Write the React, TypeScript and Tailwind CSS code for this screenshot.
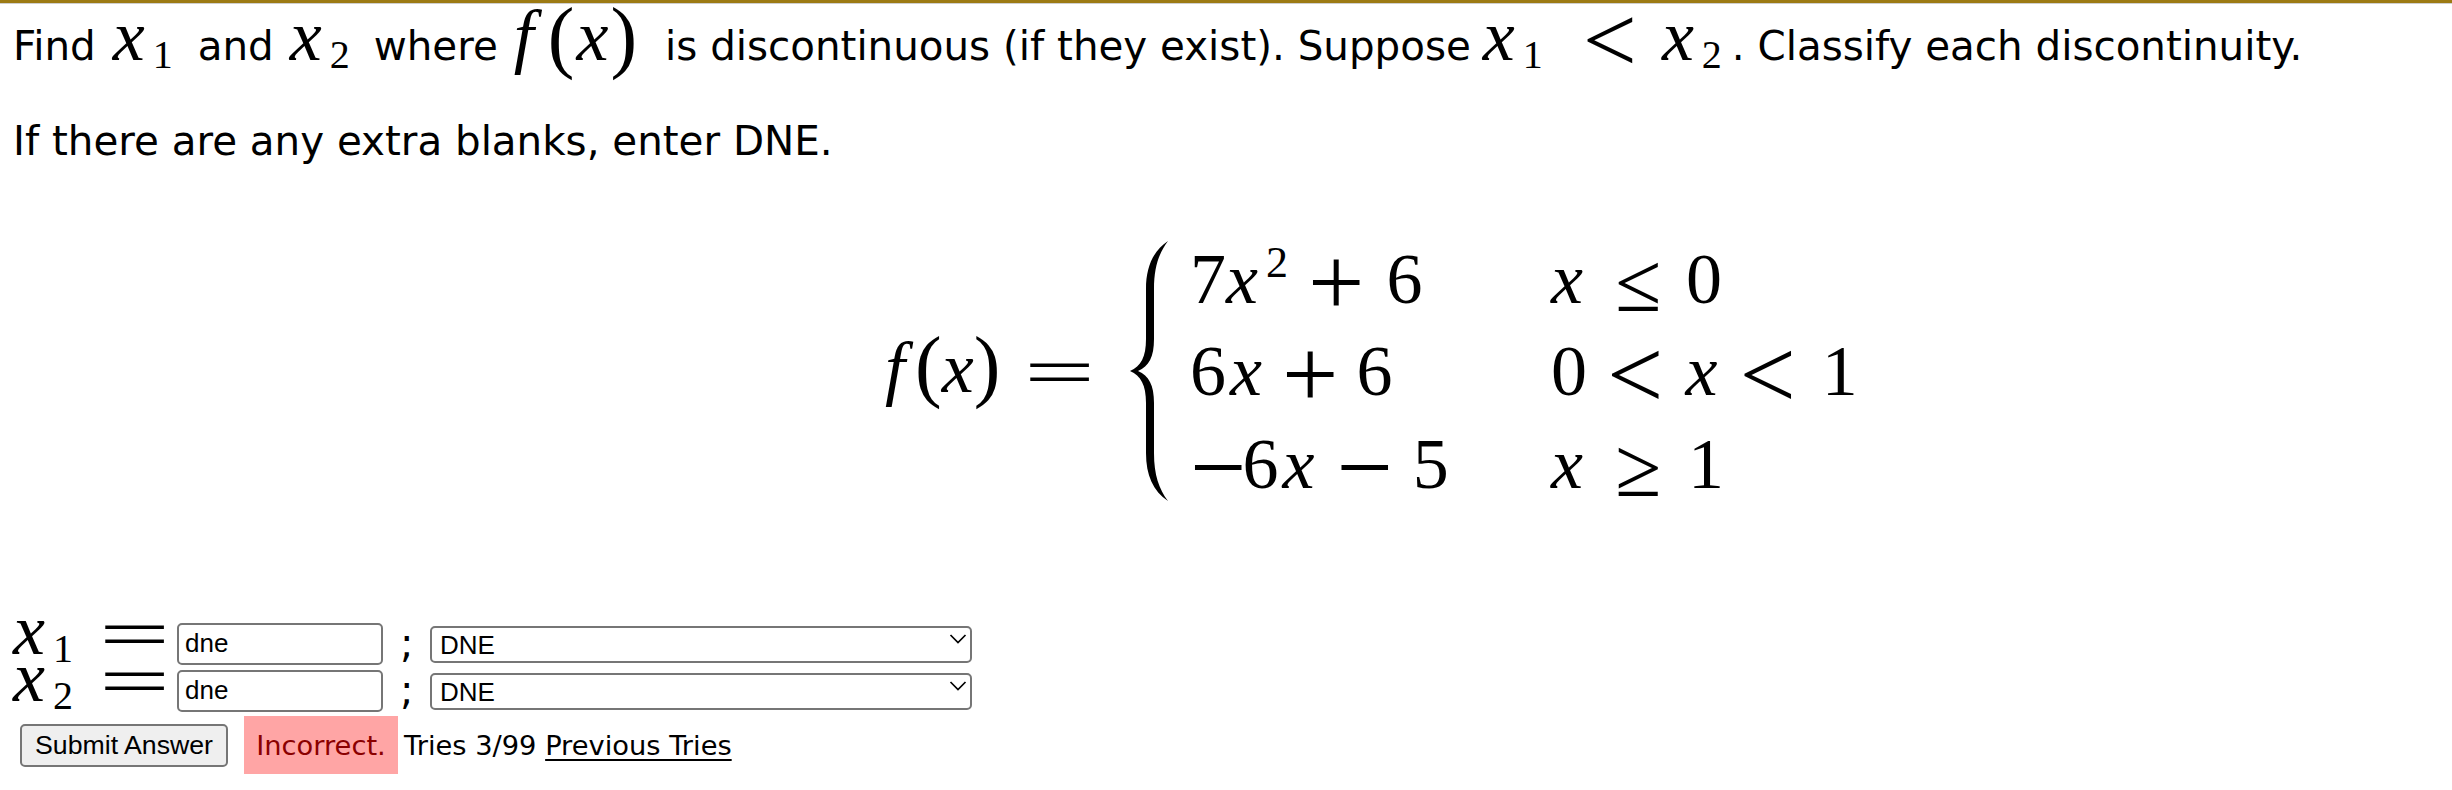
const serif = "font-['Liberation_Serif','Times_New_Roman',serif]";

function Xi({ className = "" }: { className?: string }) {
  return <span className={`${serif} text-[72px] italic ${className}`}>x</span>;
}

function Sub({ n }: { n: number }) {
  return <span className={`${serif} relative top-[8px] ml-[8px] text-[40px]`}>{n}</span>;
}

function Xvar({ n, className = "" }: { n: number; className?: string }) {
  return (
    <span className={`inline-flex items-baseline whitespace-nowrap ${className}`}>
      <Xi />
      <Sub n={n} />
    </span>
  );
}

function Equals({ className = "" }: { className?: string }) {
  return <span className={`relative top-[4px] inline-block origin-left scale-x-[1.8] text-[70px] ${className}`}>=</span>;
}

function Chevron() {
  return (
    <svg width="18" height="10" viewBox="0 0 18 10" className="pointer-events-none absolute right-[5px] top-[14px]" aria-hidden="true">
      <path d="M1.5 1 L9 8.5 L16.5 1" fill="none" stroke="#000" strokeWidth="1.7" />
    </svg>
  );
}

function AnswerRow({ n }: { n: number }) {
  return (
    <div className="flex h-[47px] items-center">
      <div className={`${serif} -mt-[24px] flex h-[47px] w-[164px] items-baseline leading-[47px]`}>
        <Xvar n={n} />
        <Equals className="ml-[26px]" />
      </div>
      <input
        defaultValue="dne"
        className="mt-[2px] h-[42px] w-[206px] rounded-[5px] border-2 border-[#767676] bg-white px-[6px] font-['Liberation_Sans',Arial,sans-serif] text-[26px] text-black outline-none"
      />
      <span className="w-[47px] pl-[17px] text-[40px] leading-none">;</span>
      <div className="relative -mt-[3px]">
        <select
          defaultValue="DNE"
          className="h-[37px] w-[542px] appearance-none rounded-[5px] border-2 border-[#767676] bg-white pl-[8px] font-['Liberation_Sans',Arial,sans-serif] text-[26px] leading-none text-black outline-none"
        >
          <option>DNE</option>
          <option>Removable</option>
          <option>Jump</option>
          <option>Infinite</option>
        </select>
        <Chevron />
      </div>
    </div>
  );
}

function CaseBrace() {
  return (
    <svg width="44" height="264" viewBox="0 0 44 264" className="shrink-0" aria-hidden="true">
      <path
        d="M41 2 C26 12 19 28 19 50 L19 100 C19 118 14 127 3 132 C14 137 19 146 19 164 L19 214 C19 236 26 252 41 262 C32 250 27 236 27 214 L27 164 C27 146 22 137 11 132 C22 127 27 118 27 100 L27 50 C27 28 32 14 41 2 Z"
        fill="#000"
      />
    </svg>
  );
}

// operators sit lower and wider than Liberation draws them at digit size
function Op({ children, className = "" }: { children: React.ReactNode; className?: string }) {
  return <span className={`relative top-[13px] text-[100px] leading-[60px] ${className}`}>{children}</span>;
}

function Rel({ children, className = "" }: { children: React.ReactNode; className?: string }) {
  return <span className={`relative top-[8px] text-[84px] leading-[60px] ${className}`}>{children}</span>;
}

function Cell({ children }: { children: React.ReactNode }) {
  return <div className="flex h-[92.5px] items-baseline whitespace-pre leading-[92.5px]">{children}</div>;
}

export default function App() {
  return (
    <div className="h-[790px] w-[2452px] overflow-hidden bg-white font-['DejaVu_Sans',Verdana,sans-serif] text-[40.4px] leading-none text-black">
      <div className="h-[3px] bg-[#9c7a13]" />
      <div className="h-[1px] bg-[#cfcfcf]" />

      <div className="flex h-[117px] items-baseline whitespace-pre pl-[13px] pt-[4px] leading-[40px]">
        <span>Find</span>
        <Xvar n={1} className="ml-[17px]" />
        <span className="ml-[25px]">and</span>
        <Xvar n={2} className="ml-[16px]" />
        <span className="ml-[24px]">where</span>
        <span className={`${serif} ml-[16px] inline-flex items-baseline text-[72px]`}>
          <i>f</i>
          <span className="relative top-[3px] ml-[14px] text-[80px]">(</span>
          <Xi className="ml-[2px]" />
          <span className="relative top-[3px] ml-[2px] text-[80px]">)</span>
        </span>
        <span className="ml-[28px]">is discontinuous (if they exist). Suppose</span>
        <Xvar n={1} className="ml-[12px]" />
        <span className={`${serif} relative top-[12px] ml-[40px] text-[96px]`}>&lt;</span>
        <Xvar n={2} className="ml-[25px]" />
        <span className="ml-[10px]">. Classify each discontinuity.</span>
      </div>

      <p className="pl-[13px]">If there are any extra blanks, enter DNE.</p>

      <div className={`${serif} ml-[885px] mt-[78px] flex h-[264px] items-center text-[72px] leading-none`}>
        <div className="mb-[8px] flex w-[242px] items-baseline whitespace-pre leading-[60px]">
          <i>f</i>
          <span className="ml-[10px] text-[80px]">(</span>
          <Xi />
          <span className="text-[80px]">)</span>
          <Equals className="ml-[24px]" />
        </div>
        <CaseBrace />
        <div className="ml-[19px] grid grid-cols-[361px_auto]">
          <Cell>
            7<Xi />
            <span className="relative -top-[26px] ml-[8px] text-[44px] leading-none">2</span>
            <Op className="ml-[20px]">+</Op>
            <span className="ml-[22px]">6</span>
          </Cell>
          <Cell>
            <Xi />
            <Rel className="ml-[32px]">≤</Rel>
            <span className="ml-[25px]">0</span>
          </Cell>
          <Cell>
            6<Xi className="ml-[4px]" />
            <Op className="ml-[20px]">+</Op>
            <span className="ml-[18px]">6</span>
          </Cell>
          <Cell>
            0<Op className="ml-[20px]">&lt;</Op>
            <Xi className="ml-[22px]" />
            <Op className="ml-[22px]">&lt;</Op>
            <span className="ml-[26px]">1</span>
          </Cell>
          <Cell>
            <Op>−</Op>
            <span className="-ml-[4px]">6</span>
            <Xi className="ml-[4px]" />
            <Op className="ml-[22px]">−</Op>
            <span className="ml-[20px]">5</span>
          </Cell>
          <Cell>
            <Xi />
            <Rel className="ml-[32px]">≥</Rel>
            <span className="ml-[27px]">1</span>
          </Cell>
        </div>
      </div>

      <div className="mt-[116px] pl-[13px]">
        <AnswerRow n={1} />
        <AnswerRow n={2} />
      </div>

      <div className="mt-[3px] flex h-[58px] items-center pl-[20px]">
        <button className="h-[43px] w-[208px] rounded-[5px] border-2 border-[#767676] bg-[#efefef] font-['Liberation_Sans',Arial,sans-serif] text-[26.7px] text-black">
          Submit Answer
        </button>
        <span className="ml-[16px] flex h-[58px] w-[154px] items-center justify-center bg-[#ffa5a5] text-[27.3px] text-[#8b0000]">
          Incorrect.
        </span>
        <span className="ml-[6px] whitespace-pre text-[27.3px]">
          Tries 3/99 <a className="underline underline-offset-[4px]">Previous Tries</a>
        </span>
      </div>
    </div>
  );
}
